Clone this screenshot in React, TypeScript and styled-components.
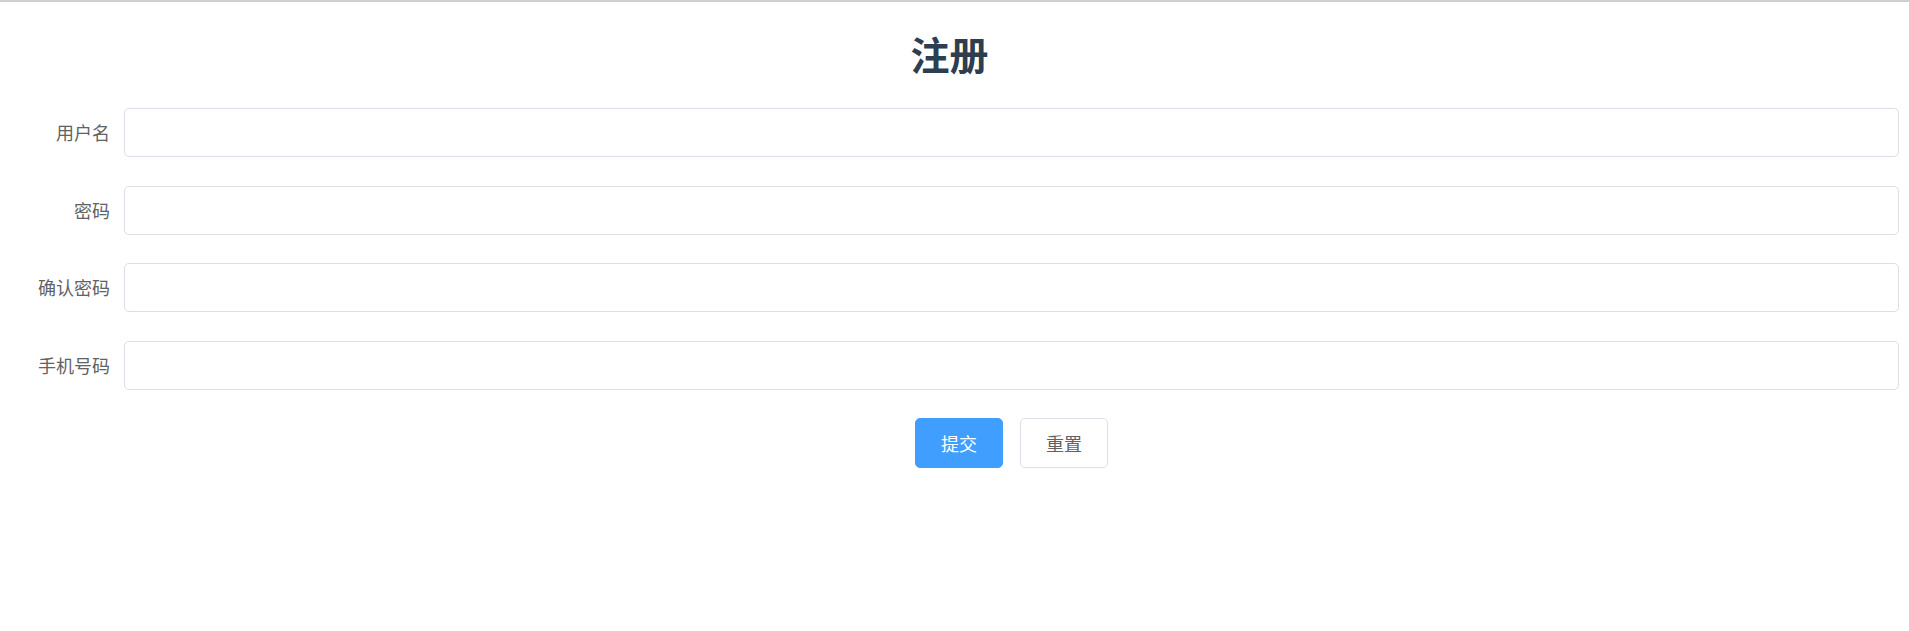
import React from "react";
import styled, { createGlobalStyle } from "styled-components";

const GlobalStyle = createGlobalStyle`
  html, body {
    margin: 0;
    padding: 0;
    background: #ffffff;
  }
  body {
    font-family: "Microsoft YaHei", "Noto Sans CJK SC", "Noto Sans", sans-serif;
  }
  * { box-sizing: border-box; }
`;

const Page = styled.div`
  width: 1909px;
  min-height: 631px;
  border-top: 2px solid #cfcfcf;
  padding: 0 10px 0 0;
`;

const Title = styled.h2`
  margin: 31px 0 35px 0;
  height: 40px;
  line-height: 40px;
  font-size: 39px;
  font-weight: 700;
  color: #2c3e50;
  text-align: center;
`;

const Form = styled.form`
  display: flex;
  flex-direction: column;
  gap: 28.5px;
`;

const Row = styled.div`
  display: grid;
  grid-template-columns: 124px 1fr;
  align-items: center;
`;

const Label = styled.label`
  padding-right: 14px;
  text-align: right;
  font-size: 18px;
  line-height: 49px;
  color: #606266;
`;

const Input = styled.input`
  height: 49px;
  width: 100%;
  border: 1px solid #dcdfe6;
  border-radius: 5px;
  padding: 0 18px;
  font-size: 17px;
  color: #606266;
  outline: none;
  background: #fff;
`;

const Actions = styled.div`
  display: flex;
  justify-content: center;
  gap: 17px;
`;

const Button = styled.button<{ $primary?: boolean }>`
  width: 88px;
  height: 50px;
  border-radius: 5px;
  font-size: 18px;
  font-family: inherit;
  cursor: pointer;
  border: 1px solid ${(p) => (p.$primary ? "#409eff" : "#dcdfe6")};
  background: ${(p) => (p.$primary ? "#409eff" : "#ffffff")};
  color: ${(p) => (p.$primary ? "#ffffff" : "#606266")};
  padding: 0;
`;

const fields = [
  { label: "用户名", type: "text" },
  { label: "密码", type: "password" },
  { label: "确认密码", type: "password" },
  { label: "手机号码", type: "text" },
];

export default function App() {
  return (
    <>
      <GlobalStyle />
      <Page>
        <Title>注册</Title>
        <Form onSubmit={(e) => e.preventDefault()}>
          {fields.map((f) => (
            <Row key={f.label}>
              <Label>{f.label}</Label>
              <Input type={f.type} />
            </Row>
          ))}
          <Row>
            <span />
            <Actions>
              <Button type="submit" $primary>提交</Button>
              <Button type="button">重置</Button>
            </Actions>
          </Row>
        </Form>
      </Page>
    </>
  );
}
